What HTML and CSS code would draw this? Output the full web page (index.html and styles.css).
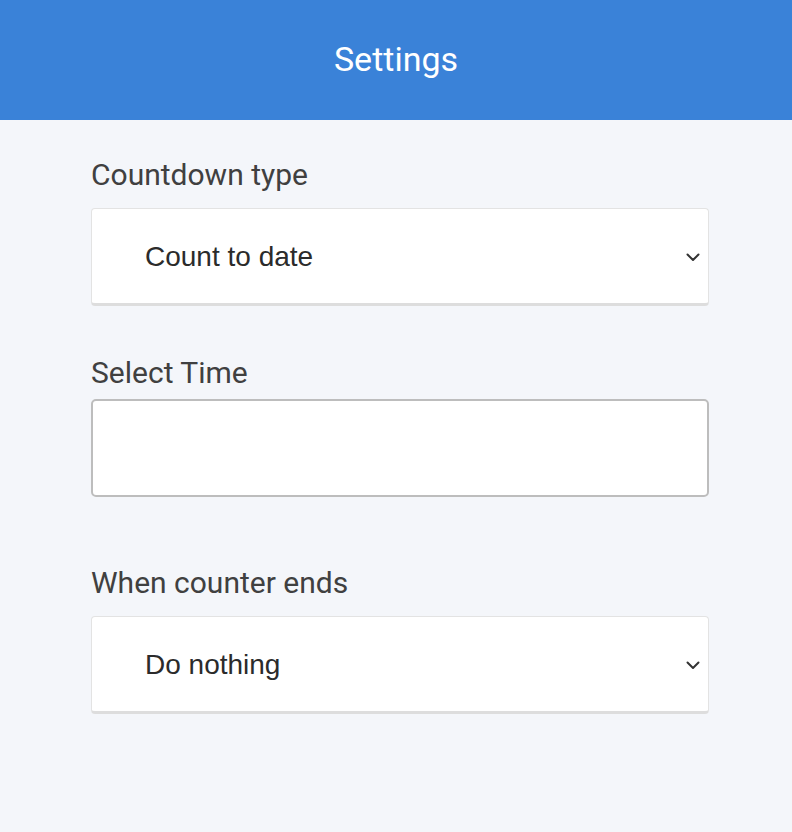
FILE: index.html
```html
<!DOCTYPE html>
<html lang="en">
<head>
<meta charset="utf-8">
<title>Settings</title>
<link rel="stylesheet" href="styles.css">
</head>
<body>
<header class="topbar">
  <h1 class="title">Settings</h1>
</header>
<main class="form">
  <div class="field field-first">
    <label class="label" for="type">Countdown type</label>
    <div class="select-wrap gap-a">
      <select id="type" class="select">
        <option>Count to date</option>
      </select>
      <svg class="chevron" width="14" height="9" viewBox="0 0 14 9"><path d="M1.5 1.5 L7 7 L12.5 1.5" fill="none" stroke="#333" stroke-width="2" stroke-linecap="round" stroke-linejoin="round"/></svg>
    </div>
  </div>
  <div class="field field-second">
    <label class="label" for="time">Select Time</label>
    <input id="time" class="input" type="text">
  </div>
  <div class="field field-third">
    <label class="label" for="end">When counter ends</label>
    <div class="select-wrap gap-c">
      <select id="end" class="select">
        <option>Do nothing</option>
      </select>
      <svg class="chevron" width="14" height="9" viewBox="0 0 14 9"><path d="M1.5 1.5 L7 7 L12.5 1.5" fill="none" stroke="#333" stroke-width="2" stroke-linecap="round" stroke-linejoin="round"/></svg>
    </div>
  </div>
</main>
</body>
</html>
```

FILE: styles.css
```css
* { box-sizing: border-box; }
html, body {
  margin: 0;
  padding: 0;
  background: #f4f6fa;
}
body {
  font-family: Roboto, "Liberation Sans", Arial, sans-serif;
  color: #444;
  min-height: 832px;
}
.topbar {
  height: 120px;
  background: #3a82d8;
  display: flex;
  align-items: flex-start;
  justify-content: center;
}
.title {
  margin: 0;
  padding-top: 39px;
  font-size: 34px;
  line-height: 40px;
  font-weight: 400;
  color: #ffffff;
}
.form {
  width: 618px;
  margin-left: 91px;
  display: flex;
  flex-direction: column;
}
.label {
  display: block;
  font-size: 30px;
  line-height: 32px;
  color: #404040;
}
.field-first { margin-top: 39px; }
.field-second { margin-top: 51px; }
.field-third { margin-top: 70px; }
.gap-a { margin-top: 17px; }
.gap-c { margin-top: 17px; }
.select-wrap {
  position: relative;
}
.select {
  display: block;
  width: 100%;
  height: 98px;
  appearance: none;
  -webkit-appearance: none;
  background: #ffffff;
  border: 1px solid #e3e3e3;
  border-bottom: 3px solid #dddddd;
  border-radius: 4px;
  padding: 0 40px 0 53px;
  font-family: "Liberation Sans", Arial, sans-serif;
  font-size: 28px;
  color: #2b2b2b;
  outline: none;
}
.chevron {
  position: absolute;
  right: 9px;
  top: 45px;
}
.input {
  display: block;
  width: 100%;
  height: 98px;
  margin-top: 10px;
  background: #ffffff;
  border: 2px solid #bdbdbd;
  border-radius: 5px;
  font-size: 28px;
  padding: 0 16px;
  outline: none;
}
```
